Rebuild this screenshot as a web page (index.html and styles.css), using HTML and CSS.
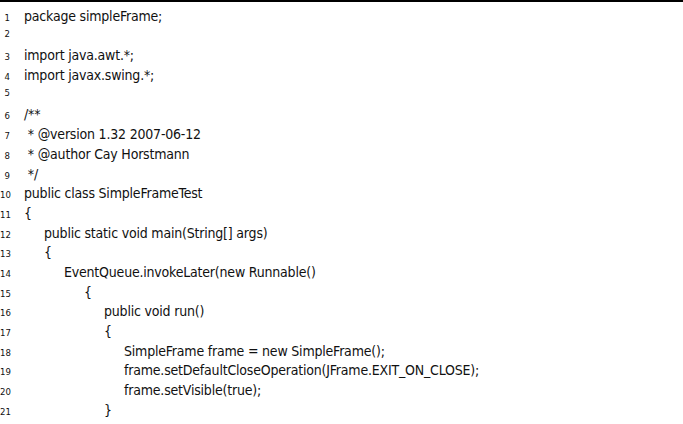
FILE: index.html
```html
<!DOCTYPE html>
<html>
<head>
<meta charset="utf-8">
<link rel="stylesheet" href="styles.css">
</head>
<body>
<div class="listing">
  <div class="row"><span class="num">1</span><span class="code">package simpleFrame;</span></div>
  <div class="row"><span class="num">2</span><span class="code"></span></div>
  <div class="row"><span class="num">3</span><span class="code">import java.awt.*;</span></div>
  <div class="row"><span class="num">4</span><span class="code">import javax.swing.*;</span></div>
  <div class="row"><span class="num">5</span><span class="code"></span></div>
  <div class="row"><span class="num">6</span><span class="code">/**</span></div>
  <div class="row"><span class="num">7</span><span class="code c"> * @version 1.32 2007-06-12</span></div>
  <div class="row"><span class="num">8</span><span class="code c"> * @author Cay Horstmann</span></div>
  <div class="row"><span class="num">9</span><span class="code c"> */</span></div>
  <div class="row"><span class="num">10</span><span class="code">public class SimpleFrameTest</span></div>
  <div class="row"><span class="num">11</span><span class="code">{</span></div>
  <div class="row"><span class="num">12</span><span class="code i1">public static void main(String[] args)</span></div>
  <div class="row"><span class="num">13</span><span class="code i1">{</span></div>
  <div class="row"><span class="num">14</span><span class="code i2">EventQueue.invokeLater(new Runnable()</span></div>
  <div class="row"><span class="num">15</span><span class="code i3">{</span></div>
  <div class="row"><span class="num">16</span><span class="code i4">public void run()</span></div>
  <div class="row"><span class="num">17</span><span class="code i4">{</span></div>
  <div class="row"><span class="num">18</span><span class="code i5">SimpleFrame frame = new SimpleFrame();</span></div>
  <div class="row"><span class="num">19</span><span class="code i5">frame.setDefaultCloseOperation(JFrame.EXIT_ON_CLOSE);</span></div>
  <div class="row"><span class="num">20</span><span class="code i5">frame.setVisible(true);</span></div>
  <div class="row"><span class="num">21</span><span class="code i4">}</span></div>
</div>
</body>
</html>
```
FILE: styles.css
```css
html, body {
  margin: 0;
  padding: 0;
  background: #ffffff;
}
.listing {
  border-top: 2px solid #000;
  padding-top: 6px;
  font-family: "DejaVu Sans Condensed", "Liberation Sans Narrow", "Liberation Sans", sans-serif;
  color: #111;
}
.row {
  display: flex;
  align-items: baseline;
  height: 19.7px;
}
.num {
  width: 10px;
  text-align: right;
  font-size: 9.5px;
  flex: none;
}
.code {
  padding-left: 14px;
  font-size: 14px;
  letter-spacing: -0.2px;
  white-space: pre;
}
.i1 { padding-left: 34px; }
.i2 { padding-left: 54px; }
.i3 { padding-left: 74px; }
.i4 { padding-left: 94px; }
.i5 { padding-left: 114px; }
```
